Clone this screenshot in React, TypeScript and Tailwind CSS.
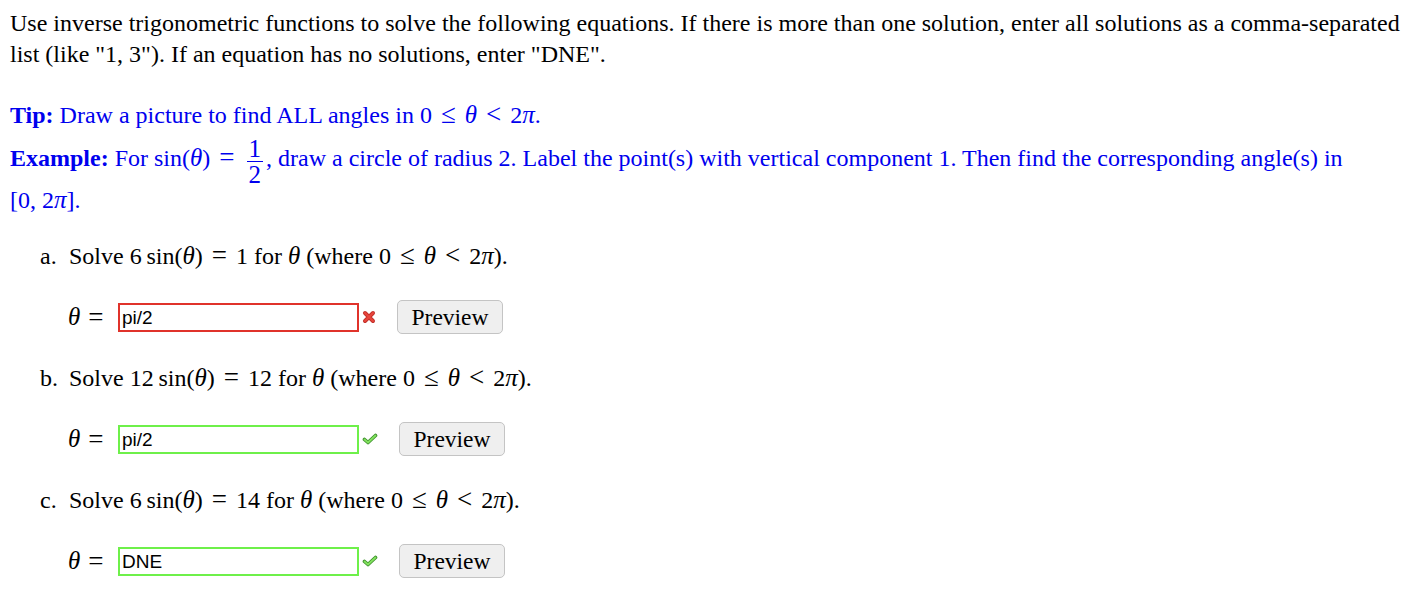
import React from 'react'

const serif = { fontFamily: '"Liberation Serif", "Times New Roman", serif' }

function Th() {
  return <i className="text-[25px] italic">θ</i>
}

function Pi() {
  return <i className="text-[25px] italic">π</i>
}

// relation sign with TeX-like spacing
function Op({ c }: { c: string }) {
  return <span className="mx-[9px] text-[27px] leading-none">{c}</span>
}

function Frac({ num, den }: { num: string; den: string }) {
  return (
    <span className="mx-[3px] inline-flex translate-y-[1px] flex-col items-center align-middle text-[25px] leading-[21px]">
      <span className="px-[2px]">{num}</span>
      <span className="my-[2px] h-[1.5px] w-full bg-[#0000ee]" />
      <span className="px-[2px]">{den}</span>
    </span>
  )
}

function CrossIcon() {
  return (
    <svg width="14" height="14" viewBox="0 0 14 14" className="shrink-0">
      <path d="M3 3 L11 11 M11 3 L3 11" stroke="#c2302a" strokeWidth="4" strokeLinecap="round" />
      <path d="M3 3 L11 11 M11 3 L3 11" stroke="#e9463c" strokeWidth="2" strokeLinecap="round" />
    </svg>
  )
}

function CheckIcon() {
  return (
    <svg width="16" height="12" viewBox="0 0 16 12" className="shrink-0">
      <path d="M2.5 6.5 L6 9.5 L13.5 2.5" fill="none" stroke="#3d8f2c" strokeWidth="3.6" strokeLinecap="round" strokeLinejoin="round" />
      <path d="M2.5 6.5 L6 9.5 L13.5 2.5" fill="none" stroke="#82e25e" strokeWidth="1.8" strokeLinecap="round" strokeLinejoin="round" />
    </svg>
  )
}

function AnswerRow({ value, ok }: { value: string; ok: boolean }) {
  return (
    <div className="flex h-[34px] items-center pl-[58px]">
      <span className="flex w-[50px] items-center text-[24px]">
        <Th />
        <span className="ml-[8px] text-[27px] leading-none">=</span>
      </span>
      <div
        className={`flex h-[29px] w-[241px] items-end border-2 bg-white pb-[1px] pl-[2px] text-[19px] leading-[22px] text-black ${
          ok ? 'border-[#6ef04a]' : 'border-[#e0332b]'
        }`}
        style={{ fontFamily: '"Liberation Sans", Arial, sans-serif' }}
      >
        {value}
      </div>
      <div className={`flex items-center ${ok ? 'ml-[3px] w-[37px]' : 'ml-[3px] w-[35px]'}`}>
        {ok ? <CheckIcon /> : <CrossIcon />}
      </div>
      <button className="flex h-[34px] w-[106px] items-center justify-center rounded-[5px] border border-[#c4c4c4] bg-[#efefef] text-[23.5px] text-black">
        Preview
      </button>
    </div>
  )
}

function Part({ letter, a, b, value, ok }: { letter: string; a: string; b: string; value: string; ok: boolean }) {
  return (
    <div>
      <div className="flex h-[34px] items-center pl-[30px] text-[24px]">
        <span className="w-[29px]">{letter}.</span>
        <span>
          Solve {a}&thinsp;sin(<Th />)
          <Op c="=" />
          {b} for <Th /> (where 0<Op c="≤" />
          <Th />
          <Op c="<" />
          2<Pi />).
        </span>
      </div>
      <div className="mt-[27px]">
        <AnswerRow value={value} ok={ok} />
      </div>
    </div>
  )
}

export default function App() {
  return (
    <div className="min-h-screen bg-white px-[10px] pt-[8px] text-black" style={serif}>
      <p className="w-[1392px] text-[24px] leading-[31px]">
        Use inverse trigonometric functions to solve the following equations. If there is more than one solution, enter all solutions as a comma-separated list (like "1, 3"). If an equation has no solutions, enter "DNE".
      </p>

      <div className="mt-[29px] text-[24px] text-[#0000ee]">
        <p className="leading-[31px]">
          <b>Tip:</b> Draw a picture to find ALL angles in 0<Op c="≤" />
          <Th />
          <Op c="<" />
          2<Pi />.
        </p>
        <p className="mt-[4px] leading-[46px]">
          <b>Example:</b> For sin(<Th />)
          <Op c="=" />
          <Frac num="1" den="2" />, draw a circle of radius 2. Label the point(s) with vertical component 1. Then find the corresponding angle(s) in
        </p>
        <p className="leading-[31px]">
          [0, 2<Pi />].
        </p>
      </div>

      <div className="mt-[23px] flex flex-col gap-[27px]">
        <Part letter="a" a="6" b="1" value="pi/2" ok={false} />
        <Part letter="b" a="12" b="12" value="pi/2" ok={true} />
        <Part letter="c" a="6" b="14" value="DNE" ok={true} />
      </div>
    </div>
  )
}
